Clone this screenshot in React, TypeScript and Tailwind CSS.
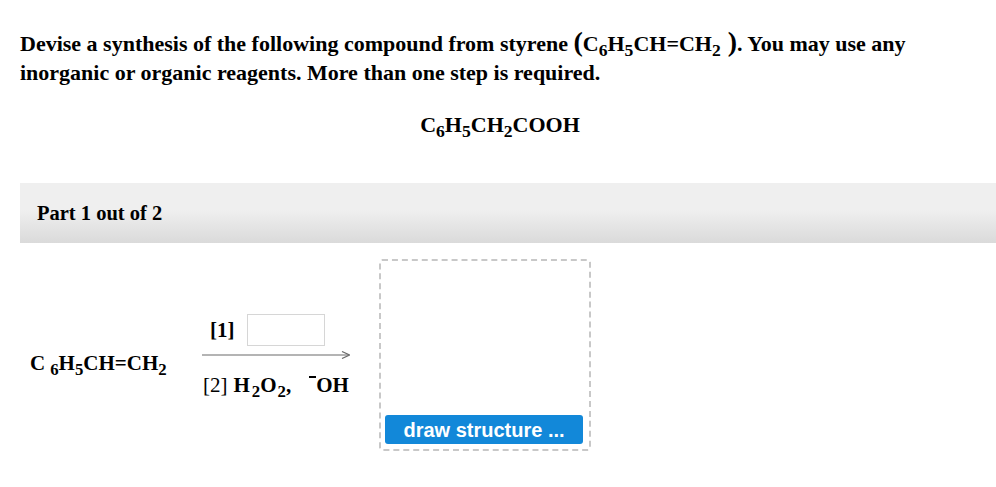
import React from "react";

const serif = { fontFamily: '"Liberation Serif", "Times New Roman", serif' };

function Sub({ children, cls = "" }: { children: React.ReactNode; cls?: string }) {
  return <span className={"relative top-[5px] text-[0.8em] leading-none " + cls}>{children}</span>;
}

export default function App() {
  return (
    <div className="w-[996px] h-[487px] bg-white text-black overflow-hidden" style={serif}>
      <div className="pl-5 pr-5 pt-[28px]">
        <p className="font-bold text-[22px] leading-[29px]">
          Devise a synthesis of the following compound from styrene{" "}
          <span className="text-[28px] leading-none">(</span>C<Sub>6</Sub>H<Sub>5</Sub>CH=CH<Sub>2</Sub>
          <span className="text-[28px] leading-none"> )</span>. You may use any
          <br />
          inorganic or organic reagents. More than one step is required.
        </p>
        <div className="mt-[26px] text-center font-bold text-[22px] leading-[24px] pl-[4px]">
          C<Sub>6</Sub>H<Sub>5</Sub>CH<Sub>2</Sub>COOH
        </div>
      </div>

      <div className="ml-5 mt-[46px] h-[60px] flex items-center pl-[17px] bg-[linear-gradient(to_bottom,#efefef_0%,#efefef_45%,#dadada_100%)]">
        <span className="font-bold text-[20.5px]">Part 1 out of 2</span>
      </div>

      <div className="mt-[16px] flex items-center pl-[30px]">
        <div className="w-[138px] font-bold text-[21px] mt-[17px] leading-none whitespace-nowrap">
          C<Sub cls="ml-[5px]">6</Sub>H<Sub>5</Sub>CH=CH<Sub>2</Sub>
        </div>
        <div className="ml-[34px] w-[148px] flex flex-col">
          <div className="flex items-center pl-2 h-[32px] mb-[5px]">
            <span className="font-bold text-[21px] leading-none">[1]</span>
            <div className="ml-[12px] w-[78px] h-[32px] border border-[#d6d6d6] bg-white" />
          </div>
          <svg width="148" height="8" viewBox="0 0 148 8" className="block">
            <line x1="0" y1="4" x2="147" y2="4" stroke="#6a6a6a" strokeWidth="1.2" />
            <polyline points="140,0.5 147.5,4 140,7.5" fill="none" stroke="#6a6a6a" strokeWidth="1.2" />
          </svg>
          <div className="mt-[16px] text-[21px] leading-none whitespace-nowrap pl-[1px]">
            [2]
            <span className="font-bold ml-[6px]">
              H<Sub cls="ml-[2px]">2</Sub>O<Sub cls="ml-[1px]">2</Sub>,
              <span className="inline-block align-top ml-[18px] mt-[1px] w-[7px] h-[2px] bg-black" />
              OH
            </span>
          </div>
        </div>
        <div className="ml-[29px] w-[212px] h-[192px] border-2 border-dashed border-[#c8c8c8] rounded-[3px] flex flex-col justify-end p-[4px] pb-[5px]">
          <button
            className="w-[198px] h-[29px] bg-[#1288d9] rounded-[3px] text-white font-bold text-[20px] leading-none"
            style={{ fontFamily: '"Liberation Sans", Arial, sans-serif' }}
          >
            draw structure ...
          </button>
        </div>
      </div>
    </div>
  );
}
